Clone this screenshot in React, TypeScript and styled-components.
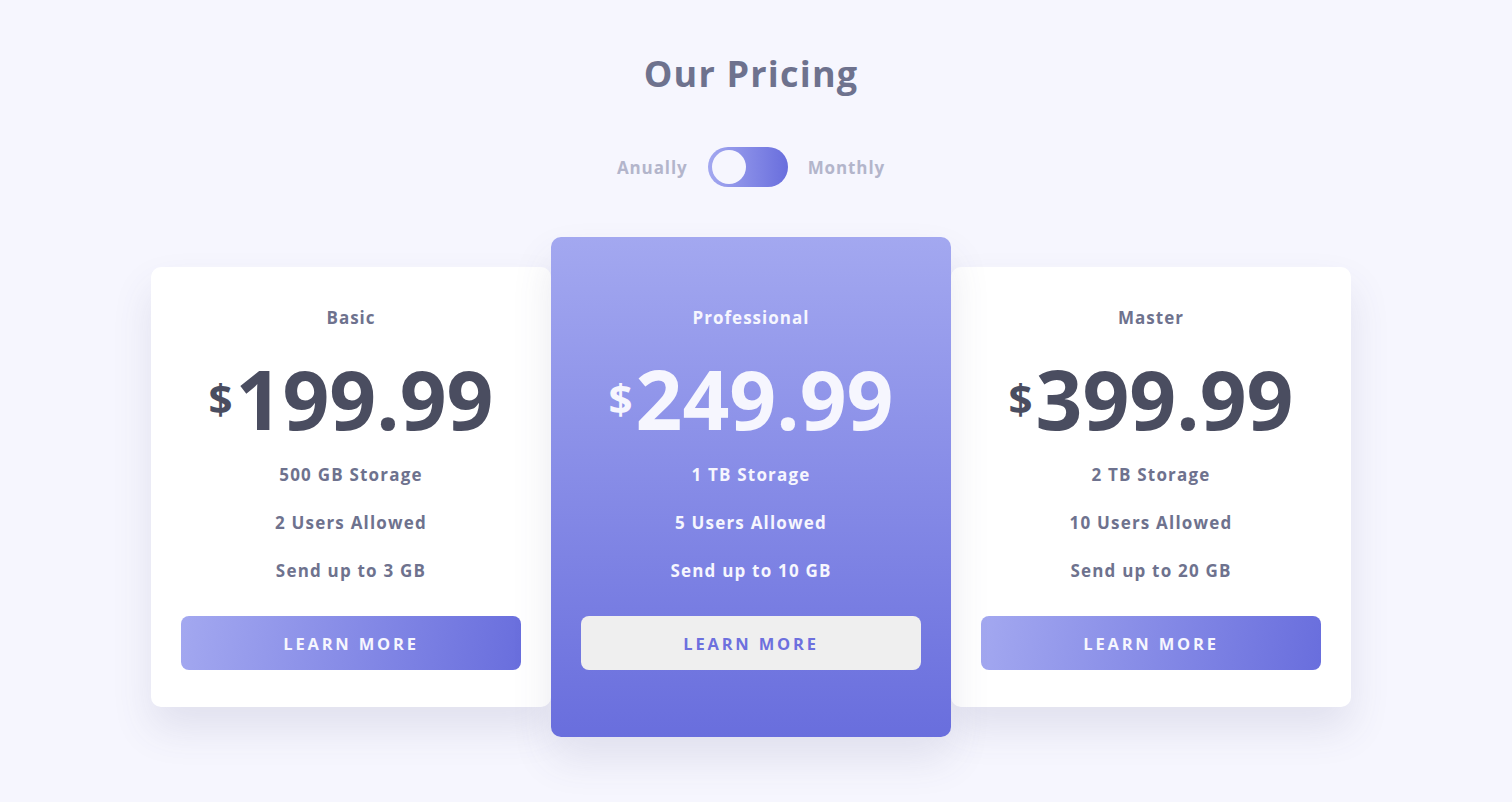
import styled, { createGlobalStyle } from "styled-components";

const GlobalStyle = createGlobalStyle`
  html, body {
    margin: 0;
    padding: 0;
    background: #f6f6fe;
    font-family: "Open Sans", "Liberation Sans", sans-serif;
  }
  * {
    box-sizing: border-box;
  }
`;

const Page = styled.main`
  display: flex;
  flex-direction: column;
  align-items: center;
  padding: 52px 10px 0 0;
  min-height: 802px;
`;

const Title = styled.h1`
  margin: 0;
  font-size: 36px;
  line-height: 44px;
  font-weight: 700;
  letter-spacing: 1.2px;
  color: #6e728e;
`;

const ToggleRow = styled.div`
  margin-top: 51px;
  display: flex;
  align-items: center;
  gap: 20px;
`;

const ToggleLabel = styled.span`
  font-size: 17px;
  font-weight: 700;
  letter-spacing: 0.9px;
  color: #b3b5cb;
`;

const Switch = styled.button`
  width: 80px;
  height: 40px;
  border: none;
  border-radius: 20px;
  padding: 0 4px;
  display: flex;
  align-items: center;
  background: linear-gradient(90deg, #a3a8f0, #696edd);
  cursor: pointer;
`;

const Knob = styled.span`
  width: 34px;
  height: 34px;
  border-radius: 50%;
  background: #f6f6fe;
`;

const Cards = styled.section`
  margin-top: 50px;
  display: flex;
  align-items: center;
`;

const Card = styled.article<{ $featured?: boolean }>`
  position: relative;
  z-index: ${(p) => (p.$featured ? 2 : 1)};
  width: 400px;
  height: ${(p) => (p.$featured ? 500 : 440)}px;
  padding: ${(p) => (p.$featured ? "69px 30px 67px" : "39px 30px 37px")};
  border-radius: 10px;
  display: flex;
  flex-direction: column;
  align-items: center;
  background: ${(p) =>
    p.$featured ? "linear-gradient(180deg, #a3a8f0, #696edd)" : "#ffffff"};
  box-shadow: 0 22px 40px rgba(70, 74, 120, 0.12);
  color: ${(p) => (p.$featured ? "#f6f6fe" : "#6e728e")};
`;

const PlanName = styled.h2`
  margin: 0;
  font-size: 17px;
  line-height: 24px;
  font-weight: 700;
  letter-spacing: 1px;
`;

const Price = styled.div<{ $featured?: boolean }>`
  margin-top: 20px;
  height: 95px;
  display: flex;
  align-items: center;
  gap: 3px;
  color: ${(p) => (p.$featured ? "#f6f6fe" : "#4a4d60")};
  font-weight: 700;
`;

const Dollar = styled.span`
  font-size: 42px;
  line-height: 1;
`;

const Amount = styled.span`
  font-size: 82px;
  line-height: 1;
`;

const Features = styled.ul`
  list-style: none;
  margin: 6px 0 0;
  padding: 0;
  display: flex;
  flex-direction: column;
  align-items: center;
`;

const Feature = styled.li`
  height: 48px;
  line-height: 48px;
  font-size: 17px;
  font-weight: 700;
  letter-spacing: 1.2px;
`;

const LearnMore = styled.button<{ $featured?: boolean }>`
  margin-top: 21px;
  width: 100%;
  height: 54px;
  border: none;
  border-radius: 8px;
  font-family: inherit;
  font-size: 16.5px;
  font-weight: 700;
  letter-spacing: 2.8px;
  cursor: pointer;
  background: ${(p) =>
    p.$featured ? "#efefef" : "linear-gradient(100deg, #a3a8f0, #696edd)"};
  color: ${(p) => (p.$featured ? "#6d70de" : "#f6f6fe")};
`;

const plans = [
  {
    name: "Basic",
    price: "199.99",
    features: ["500 GB Storage", "2 Users Allowed", "Send up to 3 GB"],
  },
  {
    name: "Professional",
    price: "249.99",
    features: ["1 TB Storage", "5 Users Allowed", "Send up to 10 GB"],
    featured: true,
  },
  {
    name: "Master",
    price: "399.99",
    features: ["2 TB Storage", "10 Users Allowed", "Send up to 20 GB"],
  },
];

export default function App() {
  return (
    <>
      <GlobalStyle />
      <Page>
        <Title>Our Pricing</Title>

        <ToggleRow>
          <ToggleLabel>Anually</ToggleLabel>
          <Switch aria-label="Toggle billing period">
            <Knob />
          </Switch>
          <ToggleLabel>Monthly</ToggleLabel>
        </ToggleRow>

        <Cards>
          {plans.map((plan) => (
            <Card key={plan.name} $featured={plan.featured}>
              <PlanName>{plan.name}</PlanName>
              <Price $featured={plan.featured}>
                <Dollar>$</Dollar>
                <Amount>{plan.price}</Amount>
              </Price>
              <Features>
                {plan.features.map((f) => (
                  <Feature key={f}>{f}</Feature>
                ))}
              </Features>
              <LearnMore $featured={plan.featured}>LEARN MORE</LearnMore>
            </Card>
          ))}
        </Cards>
      </Page>
    </>
  );
}
